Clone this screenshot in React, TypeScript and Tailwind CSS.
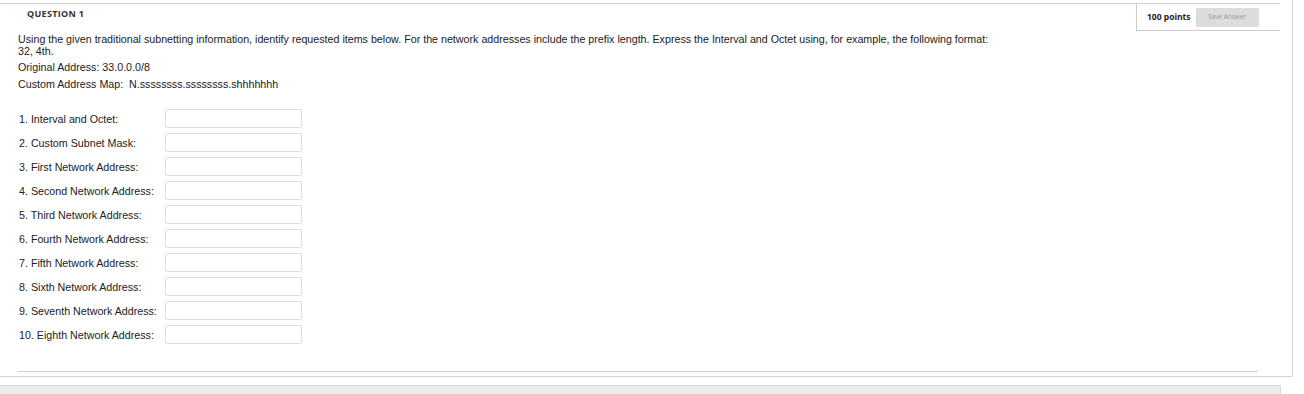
const rows = [
  "1. Interval and Octet:",
  "2. Custom Subnet Mask:",
  "3. First Network Address:",
  "4. Second Network Address:",
  "5. Third Network Address:",
  "6. Fourth Network Address:",
  "7. Fifth Network Address:",
  "8. Sixth Network Address:",
  "9. Seventh Network Address:",
  "10. Eighth Network Address:",
];

export default function App() {
  return (
    <div className="relative h-[394px] w-[1304px] overflow-hidden bg-white">
      <div className="flex h-[377px] w-[1293px] flex-col border-r border-b border-[#d4d4d4]">
        <div className="mt-[3px] flex h-[31px] w-[1280px] border-t border-[#cfcfcf]">
          <div className="flex-1 pl-[27px] pt-[3px] font-['Open_Sans',sans-serif] text-[9px] font-bold tracking-[0.3px] text-[#333]">
            QUESTION 1
          </div>
          <div className="flex h-[27px] w-[144px] items-center gap-[5px] border-l border-b border-[#cccccc] pl-[10px]">
            <span className="font-['Open_Sans',sans-serif] text-[8.5px] font-bold text-[#222]">100 points</span>
            <span className="flex h-[19px] w-[63px] items-center justify-center bg-[#dcdcdc] font-['Open_Sans',sans-serif] text-[6.5px] text-[#9a9a9a]">
              Save Answer
            </span>
          </div>
        </div>
        <div className="pl-[18px] font-['Liberation_Sans',Arial,sans-serif] text-[10.7px] leading-[12px] text-[#222]">
          <p className="-mt-[1px]">
            Using the given traditional subnetting information, identify requested items below. For the network addresses include the prefix length. Express the Interval and Octet using, for example, the following format:
            <br />
            32, 4th.
          </p>
          <p className="mt-[4px]">Original Address: 33.0.0.0/8</p>
          <p className="mt-[5px]">Custom Address Map:&nbsp; N.ssssssss.ssssssss.shhhhhhh</p>
          <div className="mt-[19px] flex flex-col gap-[5px]">
            {rows.map((r) => (
              <div key={r} className="flex h-[19px] items-center">
                <span className="w-[147px] pl-[1px]">{r}</span>
                <input
                  type="text"
                  className="h-[19px] w-[137px] rounded-[2px] border border-[#dedede] bg-white outline-none"
                />
              </div>
            ))}
          </div>
        </div>
        <div className="mx-[18px] mt-auto mb-[4px] w-[1240px] border-t border-[#cfcfcf]" />
      </div>
      <div className="mt-[8px] h-[9px] w-[1281px] border-t border-r border-[#d8d8d8] bg-[#ececec]" />
    </div>
  );
}
